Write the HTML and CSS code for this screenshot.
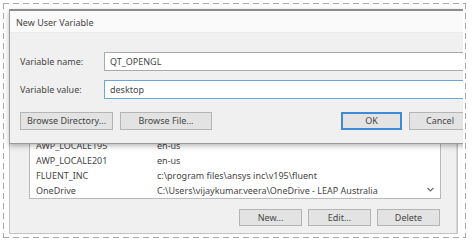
FILE: index.html
```
<!DOCTYPE html>
<html>
<head lang="en">
    <meta charset="UTF-8">
    <title>New User Variable</title>
    <link rel="stylesheet" href="styles.css">
</head>
<body>
<div class="frame">
    <div class="clip">
        <!-- 后面的环境变量窗口 -->
        <div class="envwin">
            <div class="listbox">
                <div class="row"><span class="name">AWP_LOCALE195</span><span class="val">en-us</span></div>
                <div class="row"><span class="name">AWP_LOCALE201</span><span class="val">en-us</span></div>
                <div class="row"><span class="name">FLUENT_INC</span><span class="val">c:\program files\ansys inc\v195\fluent</span></div>
                <div class="row"><span class="name">OneDrive</span><span class="val">C:\Users\vijaykumar.veera\OneDrive - LEAP Australia</span></div>
                <svg class="arrow" width="7" height="5" viewBox="0 0 7 5"><path d="M0.5 0.8 L3.5 3.8 L6.5 0.8" fill="none" stroke="#666" stroke-width="1.2"/></svg>
            </div>
            <div class="envbtns">
                <div class="btn small">New...</div>
                <div class="btn small">Edit...</div>
                <div class="btn small">Delete</div>
            </div>
        </div>
        <!-- 新建用户变量对话框 -->
        <div class="dialog">
            <div class="title">New User Variable</div>
            <div class="body">
                <div class="field">
                    <label>Variable name:</label>
                    <div class="input">QT_OPENGL</div>
                </div>
                <div class="field">
                    <label>Variable value:</label>
                    <div class="input focus">desktop</div>
                </div>
                <div class="actions">
                    <div class="btn bdir">Browse Directory...</div>
                    <div class="btn bfile">Browse File...</div>
                    <div class="btn ok">OK</div>
                    <div class="btn cancel">Cancel</div>
                </div>
            </div>
        </div>
    </div>
</div>
</body>
</html>
```

FILE: styles.css
```
*{margin: 0; padding: 0; box-sizing: border-box;}
body {
    background: #fff;
    font-family: "Noto Sans", "Open Sans", sans-serif;
    font-size: 9px;
    color: #464646;
}
.frame {
    width: 463px;
    height: 235px;
    margin: 3px 0 0 3px;
    padding: 1px 3px 1px 1px;
    background:
        repeating-linear-gradient(90deg, #a8a8a8 0 6px, transparent 6px 10px) top left / 100% 1px no-repeat,
        repeating-linear-gradient(90deg, #a8a8a8 0 6px, transparent 6px 10px) bottom left / 100% 1px no-repeat,
        repeating-linear-gradient(180deg, #a8a8a8 0 6px, transparent 6px 10px) top left / 1px 100% no-repeat,
        repeating-linear-gradient(180deg, #a8a8a8 0 6px, transparent 6px 10px) top right / 1px 100% no-repeat;
}
.clip {
    position: relative;
    width: 100%;
    height: 100%;
    overflow: hidden;
}
.envwin {
    width: 449px;
    height: 225px;
    margin: 5px 0 0 5px;
    padding: 30px 0 0 19px;
    background: #f0f0f0;
    border: 1px solid #c4c4c4;
    box-shadow: inset -11px 0 0 -10px #d6d6d6;
}
.listbox {
    position: relative;
    width: 412px;
    height: 159px;
    padding: 0 0 0 6px;
    background: #fff;
    border: 1px solid #b9b9b9;
    display: flex;
    flex-direction: column;
    justify-content: flex-end;
}
.row {
    display: flex;
    height: 15px;
    line-height: 15px;
    white-space: nowrap;
}
.name { width: 121px; }
.arrow {
    position: absolute;
    right: 6px;
    bottom: 6px;
}
.envbtns {
    width: 411px;
    margin-top: 10px;
    display: flex;
    justify-content: flex-end;
    gap: 6px;
}
.btn {
    height: 18px;
    line-height: 16px;
    text-align: center;
    background: #e3e3e3;
    border: 1px solid #b4b4b4;
    white-space: nowrap;
}
.btn.small { width: 63px; height: 17px; line-height: 15px; }
.dialog {
    position: absolute;
    top: 5px;
    left: 5px;
    width: 473px;
    height: 135px;
    background: #f0f0f0;
    border: 1px solid #9a9a9a;
    border-top: 2px solid #8c8c8c;
    box-shadow: 0 2px 5px rgba(0,0,0,.28);
}
.title {
    height: 22px;
    line-height: 23px;
    padding-left: 6px;
    background: #fafafa;
    border-bottom: 1px solid #ececec;
}
.body { padding: 19px 10px 0 10px; }
.field {
    display: flex;
    align-items: center;
    margin-bottom: 9px;
}
.field label { width: 84px; }
.input {
    flex: 1;
    height: 19px;
    line-height: 17px;
    padding-left: 5px;
    background: #fff;
    border: 1px solid #a9a9a9;
}
.input.focus { border-color: #69a6e0; }
.actions {
    display: flex;
    gap: 7px;
    margin-top: 13px;
}
.bdir { width: 93px; }
.bfile { width: 92px; }
.ok {
    width: 61px;
    margin-left: auto;
    border: 2px solid #3f8ad6;
    line-height: 14px;
}
.cancel { width: 62px; }
```
